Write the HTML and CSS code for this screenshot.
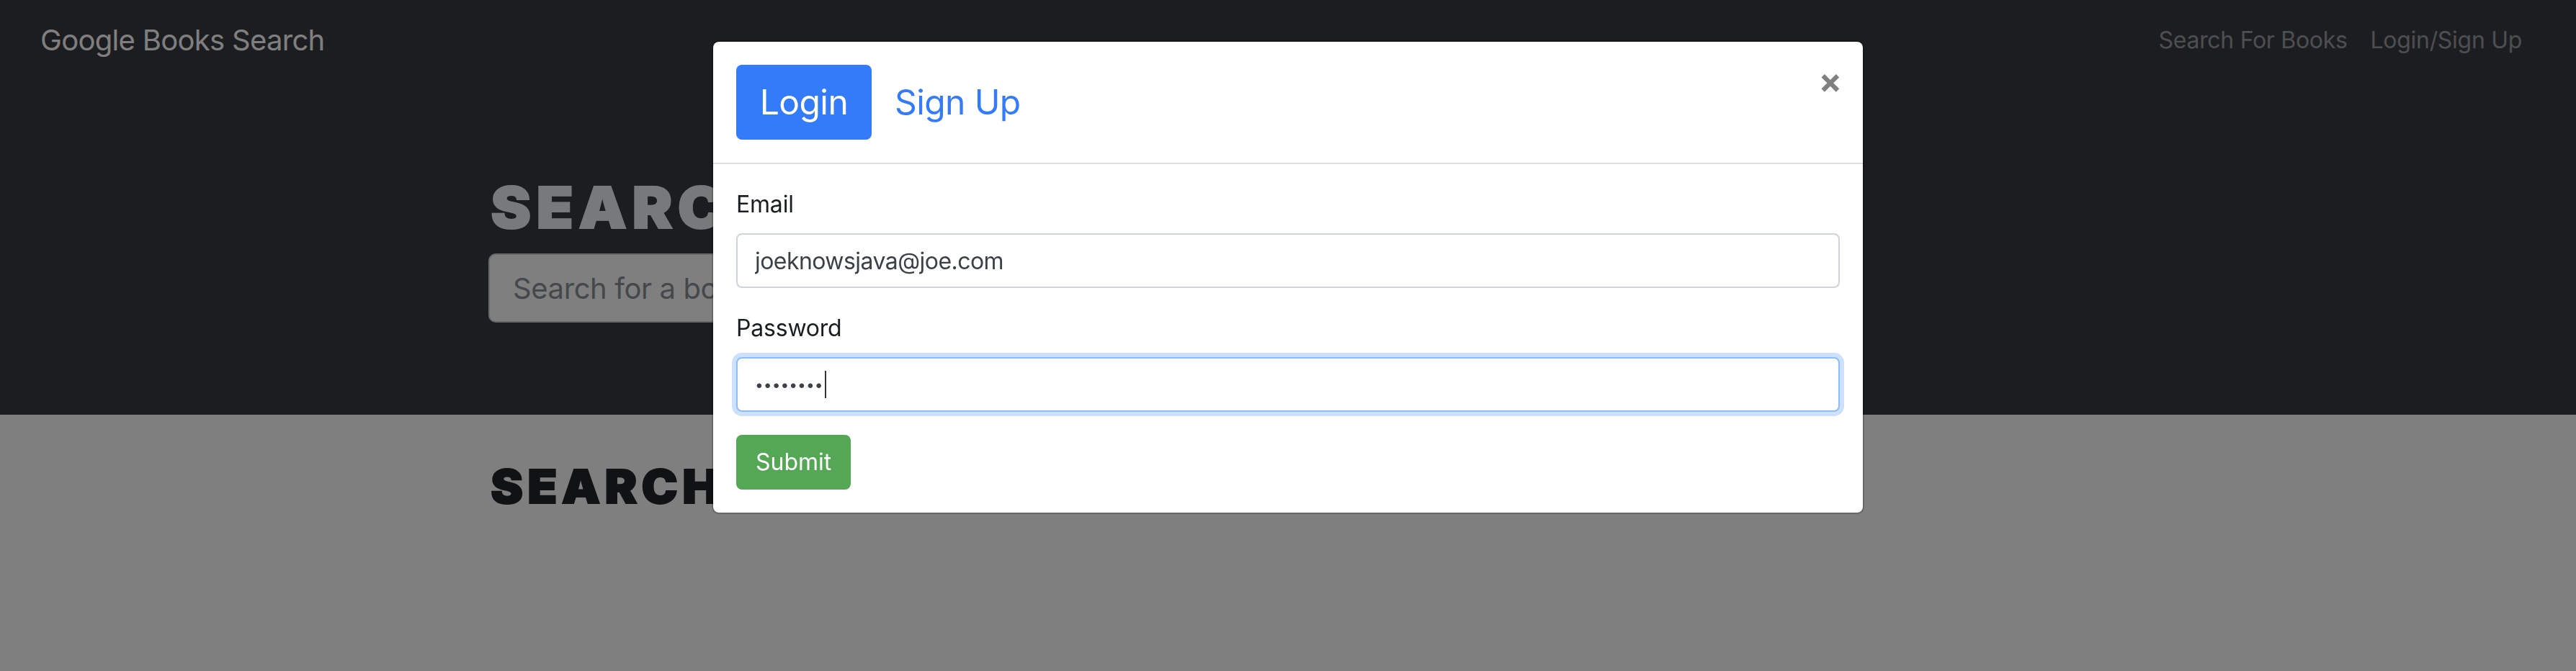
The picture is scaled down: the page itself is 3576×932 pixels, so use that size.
FILE: index.html
```html
<!DOCTYPE html>
<html lang="en">
<head>
<meta charset="utf-8">
<title>Google Books Search</title>
<link rel="stylesheet" href="styles.css">
</head>
<body>
<nav class="navbar">
  <a class="brand" href="#">Google Books Search</a>
  <div class="nav-links">
    <a class="nav-link" href="#">Search For Books</a>
    <a class="nav-link" href="#">Login/Sign Up</a>
  </div>
</nav>
<header class="hero">
  <div class="container">
    <h1 class="hero-title">Search for Books!</h1>
    <input class="search-input" type="text" placeholder="Search for a book">
  </div>
</header>
<main class="container results">
  <h2 class="results-title">Search for a book to begin</h2>
</main>
<div class="backdrop"></div>
<div class="modal-wrap">
  <div class="modal">
    <div class="modal-header">
      <ul class="pills">
        <li><a class="pill active" href="#">Login</a></li>
        <li><a class="pill" href="#">Sign Up</a></li>
      </ul>
      <button class="close" type="button">×</button>
    </div>
    <form class="modal-body">
      <div class="form-group">
        <label class="form-label" for="email">Email</label>
        <input class="form-control" id="email" type="text" value="joeknowsjava@joe.com">
      </div>
      <div class="form-group">
        <label class="form-label" for="password">Password</label>
        <div class="caret-wrap">
          <input class="form-control focused" id="password" type="password" value="password">
          <span class="caret"></span>
        </div>
      </div>
      <button class="submit" type="button">Submit</button>
    </form>
  </div>
</div>
</body>
</html>
```
FILE: styles.css
```css
* { box-sizing: border-box; }
html, body { height: 100%; }
body {
  margin: 0;
  overflow: hidden;
  background: #fff;
  color: #212529;
  font-family: Inter, "Liberation Sans", sans-serif;
  font-size: 32px;
  line-height: 48px;
}
a { text-decoration: none; }

.navbar {
  display: flex;
  align-items: center;
  justify-content: space-between;
  height: 112px;
  padding: 0 59px 0 56px;
  background: #383a42;
}
.brand { color: #fff; font-size: 40px; line-height: 60px; letter-spacing: -.7px; }
.nav-links { display: flex; }
.nav-link { padding: 0 16px; color: rgba(255,255,255,.5); letter-spacing: -.3px; }

.hero { height: 464px; padding-top: 128px; background: #383a42; }
.container { width: 2280px; margin: 0 auto; padding: 0 30px; }
.hero-title, .results-title {
  margin: 0;
  padding-left: 3px;
  font-weight: 900;
  text-transform: uppercase;
  -webkit-text-stroke: 2px currentColor;
  white-space: nowrap;
  transform: scaleX(1.05);
  transform-origin: left center;
}
.hero-title {
  margin-bottom: 16px;
  color: #eff4f4;
  font-size: 80px;
  line-height: 96px;
  letter-spacing: 7px;
}
.search-input {
  display: block;
  width: 1460px;
  height: 96px;
  padding: 16px 32px;
  border: 2px solid #ced4da;
  border-radius: 10px;
  background: #fff;
  font: inherit;
  font-size: 40px;
  line-height: 60px;
  letter-spacing: -.4px;
}
.search-input::placeholder { color: #8a9096; opacity: 1; }

.results { padding-top: 61px; }
.results-title {
  color: #212529;
  font-size: 64px;
  line-height: 77px;
  letter-spacing: 6px;
}

.backdrop { position: fixed; inset: 0; background: rgba(0,0,0,.5); }
.modal-wrap { position: fixed; inset: 0; overflow: hidden; }
.modal {
  width: 1600px;
  margin: 56px auto 0;
  border: 2px solid rgba(0,0,0,.2);
  border-radius: 10px;
  background: #fff;
  background-clip: padding-box;
}
.modal-header {
  display: flex;
  align-items: flex-start;
  justify-content: space-between;
  padding: 32px;
  border-bottom: 2px solid #dee2e6;
}
.pills { display: flex; margin: 0; padding: 0; list-style: none; }
.pill {
  display: block;
  min-width: 188px;
  padding: 16px 32px;
  border-radius: 8px;
  color: #337bf9;
  font-size: 48px;
  line-height: 72px;
  letter-spacing: -.6px;
  text-align: center;
}
.pill.active { background: #337bf9; color: #fff; }
.close {
  margin: -2px -3px 0 0;
  padding: 0;
  border: 0;
  background: none;
  color: #808080;
  font: 700 48px/48px Inter, "Liberation Sans", sans-serif;
}
.modal-body { display: block; padding: 32px; }
.form-group { margin-bottom: 32px; }
.form-label { display: block; margin-bottom: 16px; color: #1a1d20; letter-spacing: -.2px; }
.form-control {
  display: block;
  width: 100%;
  height: 76px;
  padding: 12px 24px;
  border: 2px solid #ced4da;
  border-radius: 8px;
  background: #fff;
  color: #3c4147;
  font: inherit;
  letter-spacing: -.55px;
  outline: 0;
}
.form-control.focused {
  border-color: #8bbcfb;
  box-shadow: 0 0 0 6px #cde0fd;
  font-size: 21px;
  letter-spacing: 0;
}
.caret-wrap { position: relative; }
.caret {
  position: absolute;
  left: 123px;
  top: 19px;
  width: 2px;
  height: 38px;
  background: #333;
}
.submit {
  display: block;
  height: 76px;
  padding: 12px 27px;
  border: 0;
  border-radius: 8px;
  background: #54a754;
  color: #fff;
  font: inherit;
}
```
